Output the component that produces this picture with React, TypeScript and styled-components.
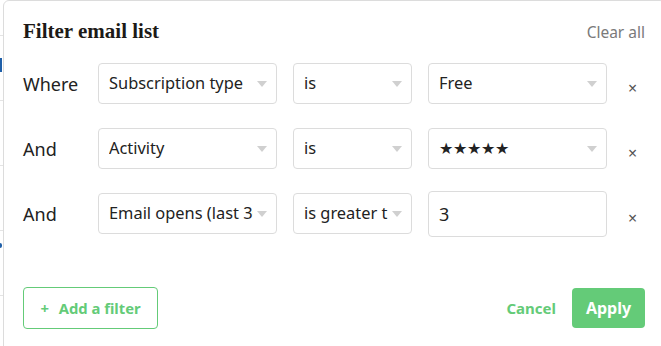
import React from "react";
import styled, { createGlobalStyle } from "styled-components";

const GlobalStyle = createGlobalStyle`
    html, body {
        margin: 0;
        padding: 0;
        background: #ffffff;
        overflow: hidden;
    }
    body {
        font-family: "Noto Sans", "Open Sans", sans-serif;
        color: #222;
    }
`;

type Filter = {
    joiner: string;
    field: string;
    operator: string;
    value: string;
    valueIsInput?: boolean;
};

const filters: Filter[] = [
    { joiner: "Where", field: "Subscription type", operator: "is", value: "Free" },
    { joiner: "And", field: "Activity", operator: "is", value: "★★★★★" },
    {
        joiner: "And",
        field: "Email opens (last 30 days)",
        operator: "is greater than",
        value: "3",
        valueIsInput: true,
    },
];

const Caret = () => (
    <svg width="10" height="6" viewBox="0 0 10 6">
        <path d="M0 0 L10 0 L5 6 Z" fill="#d0d0d0" />
    </svg>
);

const Select = ({ text, width }: { text: string; width: number }) => (
    <StyledSelect $width={width}>
        <span className="select__text">{text}</span>
        <span className="select__caret">
            <Caret />
        </span>
    </StyledSelect>
);

export default function App() {
    return (
        <>
            <GlobalStyle />
            <Page>
                <Backdrop>
                    {[0, 1, 2, 3, 4, 5].map((i) => (
                        <BackdropRow key={i} $mark={i === 1 ? "bar" : i === 4 ? "dot" : undefined} />
                    ))}
                </Backdrop>
                <Modal>
                    <Header>
                        <Title>Filter email list</Title>
                        <ClearAll>Clear all</ClearAll>
                    </Header>
                    <Rows>
                        {filters.map((f, i) => (
                            <Row key={i}>
                                <Joiner>{f.joiner}</Joiner>
                                <Select text={f.field} width={179} />
                                <Select text={f.operator} width={119} />
                                {f.valueIsInput ? (
                                    <ValueInput>{f.value}</ValueInput>
                                ) : (
                                    <Select text={f.value} width={179} />
                                )}
                                <Remove>×</Remove>
                            </Row>
                        ))}
                    </Rows>
                    <Footer>
                        <AddButton>
                            <span className="plus">+</span> Add a filter
                        </AddButton>
                        <Actions>
                            <CancelButton>Cancel</CancelButton>
                            <ApplyButton>Apply</ApplyButton>
                        </Actions>
                    </Footer>
                </Modal>
            </Page>
        </>
    );
}

const green = "#64cb78";

const Page = styled.div`
    display: flex;
    width: 661px;
    height: 346px;
    overflow: hidden;
`;

const Backdrop = styled.div`
    width: 3px;
    flex-shrink: 0;
    display: flex;
    flex-direction: column;
`;

const BackdropRow = styled.div<{ $mark?: "bar" | "dot" }>`
    height: 64px;
    flex-shrink: 0;
    border-bottom: 1px solid #e4e4e4;
    position: relative;
    &:first-child {
        height: 35px;
    }
    &::after {
        content: "";
        display: ${(p) => (p.$mark ? "block" : "none")};
        position: absolute;
        left: 0;
        top: ${(p) => (p.$mark === "bar" ? "22px" : "12px")};
        width: 2px;
        height: ${(p) => (p.$mark === "bar" ? "14px" : "5px")};
        background: #1f5fa8;
        border-radius: ${(p) => (p.$mark === "dot" ? "0 3px 3px 0" : "0")};
    }
`;

const Modal = styled.div`
    width: 622px;
    flex-shrink: 0;
    height: 360px;
    border: 1px solid #dcdcdc;
    border-radius: 6px;
    background: #fff;
    padding: 0 20px 0 19px;
    display: flex;
    flex-direction: column;
`;

const Header = styled.div`
    display: flex;
    justify-content: space-between;
    align-items: baseline;
    height: 62px;
    padding-top: 18px;
    box-sizing: border-box;
`;

const Title = styled.h2`
    margin: 0;
    font-family: "Liberation Serif", "DejaVu Serif", serif;
    font-weight: 700;
    font-size: 21px;
    color: #1d1a17;
`;

const ClearAll = styled.span`
    font-size: 15.5px;
    color: #7a7a7a;
`;

const Rows = styled.div`
    display: flex;
    flex-direction: column;
    gap: 24px;
`;

const Row = styled.div`
    display: flex;
    align-items: center;
    gap: 16px;
    height: 41px;
`;

const Joiner = styled.span`
    width: 59px;
    font-size: 18px;
    color: #222;
`;

const StyledSelect = styled.div<{ $width: number }>`
    width: ${(p) => p.$width}px;
    height: 41px;
    box-sizing: border-box;
    border: 1px solid #dcdcdc;
    border-radius: 4px;
    display: flex;
    align-items: center;
    padding: 0 9px 0 10px;
    font-size: 16.4px;
    color: #222;
    .select__text {
        flex: 1;
        white-space: nowrap;
        overflow: hidden;
        padding-bottom: 2px;
    }
    .select__caret {
        display: flex;
        margin-left: 4px;
    }
`;

const ValueInput = styled.div`
    width: 179px;
    height: 46px;
    box-sizing: border-box;
    border: 1px solid #dcdcdc;
    border-radius: 4px;
    display: flex;
    align-items: center;
    padding: 0 10px;
    font-size: 18px;
    color: #222;
`;

const Remove = styled.span`
    font-size: 16px;
    color: #555;
    padding-left: 5px;
    margin-top: 8px;
`;

const Footer = styled.div`
    display: flex;
    justify-content: space-between;
    align-items: center;
    margin-top: 53px;
`;

const AddButton = styled.button`
    width: 135px;
    height: 42px;
    border: 1px solid ${green};
    border-radius: 4px;
    background: #fff;
    color: ${green};
    font-family: "Noto Sans", sans-serif;
    font-weight: 700;
    font-size: 14.8px;
    .plus {
        margin-right: 6px;
    }
`;

const Actions = styled.div`
    display: flex;
    align-items: center;
    gap: 16px;
`;

const CancelButton = styled.button`
    border: none;
    background: none;
    padding: 0;
    color: ${green};
    font-family: "Noto Sans", sans-serif;
    font-weight: 700;
    font-size: 15px;
`;

const ApplyButton = styled.button`
    width: 73px;
    height: 40px;
    border: none;
    border-radius: 4px;
    background: ${green};
    color: #fff;
    font-family: "Noto Sans", sans-serif;
    font-weight: 700;
    font-size: 16px;
`;
